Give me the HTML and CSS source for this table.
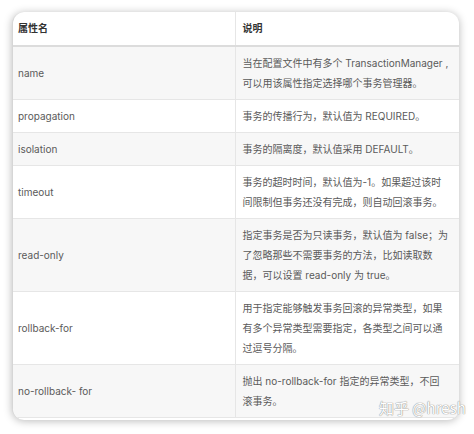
FILE: index.html
```html
<!DOCTYPE html>
<html lang="zh-CN">
<head>
<meta charset="utf-8">
<title>事务属性</title>
<link rel="stylesheet" href="styles.css">
</head>
<body>
<div class="card">
  <table class="props">
    <colgroup><col class="c1"><col class="c2"></colgroup>
    <thead>
      <tr><th>属性名</th><th>说明</th></tr>
    </thead>
    <tbody>
      <tr class="alt"><td>name</td><td>当在配置文件中有多个 TransactionManager ,<br>可以用该属性指定选择哪个事务管理器。</td></tr>
      <tr><td>propagation</td><td>事务的传播行为，默认值为 REQUIRED。</td></tr>
      <tr class="alt"><td>isolation</td><td>事务的隔离度，默认值采用 DEFAULT。</td></tr>
      <tr><td>timeout</td><td>事务的超时时间，默认值为-1。如果超过该时<br>间限制但事务还没有完成，则自动回滚事务。</td></tr>
      <tr class="alt"><td>read-only</td><td>指定事务是否为只读事务，默认值为 false；为<br>了忽略那些不需要事务的方法，比如读取数<br>据，可以设置 read-only 为 true。</td></tr>
      <tr><td>rollback-for</td><td>用于指定能够触发事务回滚的异常类型，如果<br>有多个异常类型需要指定，各类型之间可以通<br>过逗号分隔。</td></tr>
      <tr class="alt"><td>no-rollback- for</td><td>抛出 no-rollback-for 指定的异常类型，不回<br>滚事务。</td></tr>
    </tbody>
  </table>
</div>
<div class="watermark">知乎 @hresh</div>
</body>
</html>
```
FILE: styles.css
```css
html, body {
  margin: 0;
  padding: 0;
  background: #ffffff;
}
body {
  position: relative;
  width: 474px;
  height: 434px;
  overflow: hidden;
  font-family: Inter, "Noto Sans CJK SC", sans-serif;
}
.card {
  margin: 12px 0 0 12px;
  width: 447px;
  padding-bottom: 2px;
  background: #ffffff;
  border-radius: 12px;
  overflow: hidden;
  box-shadow: 0 1px 9px rgba(0, 0, 0, 0.28);
  border-left: 1px solid #d6d6d6;
  box-sizing: border-box;
}
.props {
  width: 100%;
  border-collapse: collapse;
  table-layout: fixed;
}
.c1 { width: 222px; }
.props th,
.props td {
  text-align: left;
  vertical-align: middle;
  font-size: 10px;
  line-height: 20px;
  padding: 6px 6px 6px 5px;
  border-bottom: 1px solid #e6e6e6;
  color: #5a5a5a;
  white-space: nowrap;
}
.props th:first-child,
.props td:first-child {
  border-right: 1px solid #e6e6e6;
}
.props td:last-child,
.props th:last-child {
  padding-left: 7px;
}
.props th {
  font-weight: 600;
  color: #333333;
  padding-top: 6px;
  padding-bottom: 7px;
  border-bottom: 2px solid #dcdcdc;
}
.props tr.alt td {
  background: #f7f7f7;
}
.watermark {
  position: absolute;
  left: 379px;
  top: 398px;
  font-family: "Noto Sans CJK SC", sans-serif;
  font-size: 15px;
  line-height: 20px;
  color: #ffffff;
  text-shadow: 0 0 1px #8a8a8a, 0 0 1px #8a8a8a;
  white-space: nowrap;
}
```
